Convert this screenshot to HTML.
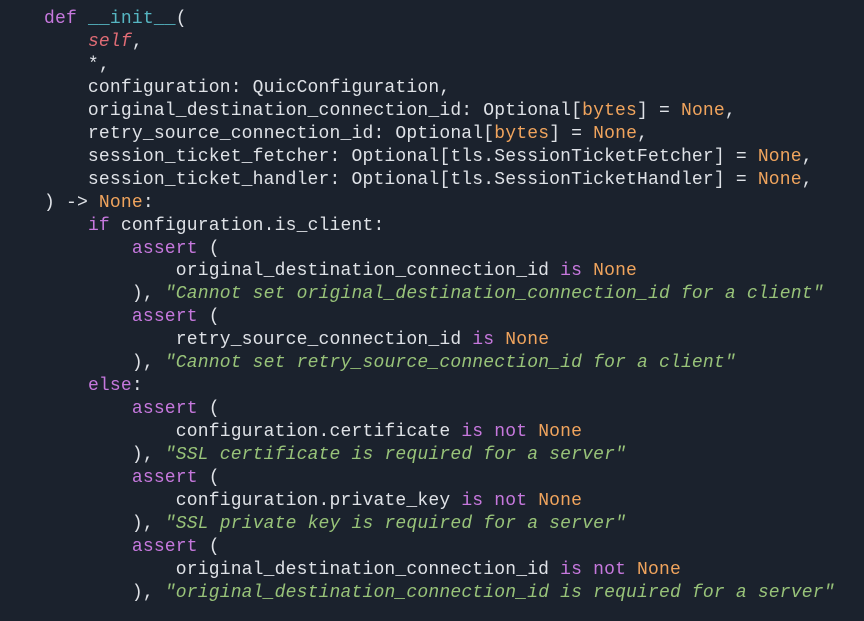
<!DOCTYPE html>
<html><head><style>
html,body{margin:0;padding:0;background:#1b222d;width:864px;height:621px;overflow:hidden}
pre{margin:0;padding:8px 0 0 44px;font-family:"Liberation Mono",monospace;font-size:18px;line-height:22.96px;letter-spacing:0.18px;color:#dfe2e7}
.k{color:#c678dd}.f{color:#56b6c2}.s{color:#e06c75;font-style:italic}.n{color:#f0a45d}.g{color:#98c379;font-style:italic}
</style></head><body><pre><span class="k">def</span> <span class="f">__init__</span>(
    <span class="s">self</span>,
    *,
    configuration: QuicConfiguration,
    original_destination_connection_id: Optional[<span class="n">bytes</span>] = <span class="n">None</span>,
    retry_source_connection_id: Optional[<span class="n">bytes</span>] = <span class="n">None</span>,
    session_ticket_fetcher: Optional[tls.SessionTicketFetcher] = <span class="n">None</span>,
    session_ticket_handler: Optional[tls.SessionTicketHandler] = <span class="n">None</span>,
) -&gt; <span class="n">None</span>:
    <span class="k">if</span> configuration.is_client:
        <span class="k">assert</span> (
            original_destination_connection_id <span class="k">is</span> <span class="n">None</span>
        ), <span class="g">"Cannot set original_destination_connection_id for a client"</span>
        <span class="k">assert</span> (
            retry_source_connection_id <span class="k">is</span> <span class="n">None</span>
        ), <span class="g">"Cannot set retry_source_connection_id for a client"</span>
    <span class="k">else</span>:
        <span class="k">assert</span> (
            configuration.certificate <span class="k">is</span> <span class="k">not</span> <span class="n">None</span>
        ), <span class="g">"SSL certificate is required for a server"</span>
        <span class="k">assert</span> (
            configuration.private_key <span class="k">is</span> <span class="k">not</span> <span class="n">None</span>
        ), <span class="g">"SSL private key is required for a server"</span>
        <span class="k">assert</span> (
            original_destination_connection_id <span class="k">is</span> <span class="k">not</span> <span class="n">None</span>
        ), <span class="g">"original_destination_connection_id is required for a server"</span>
</pre></body></html>
